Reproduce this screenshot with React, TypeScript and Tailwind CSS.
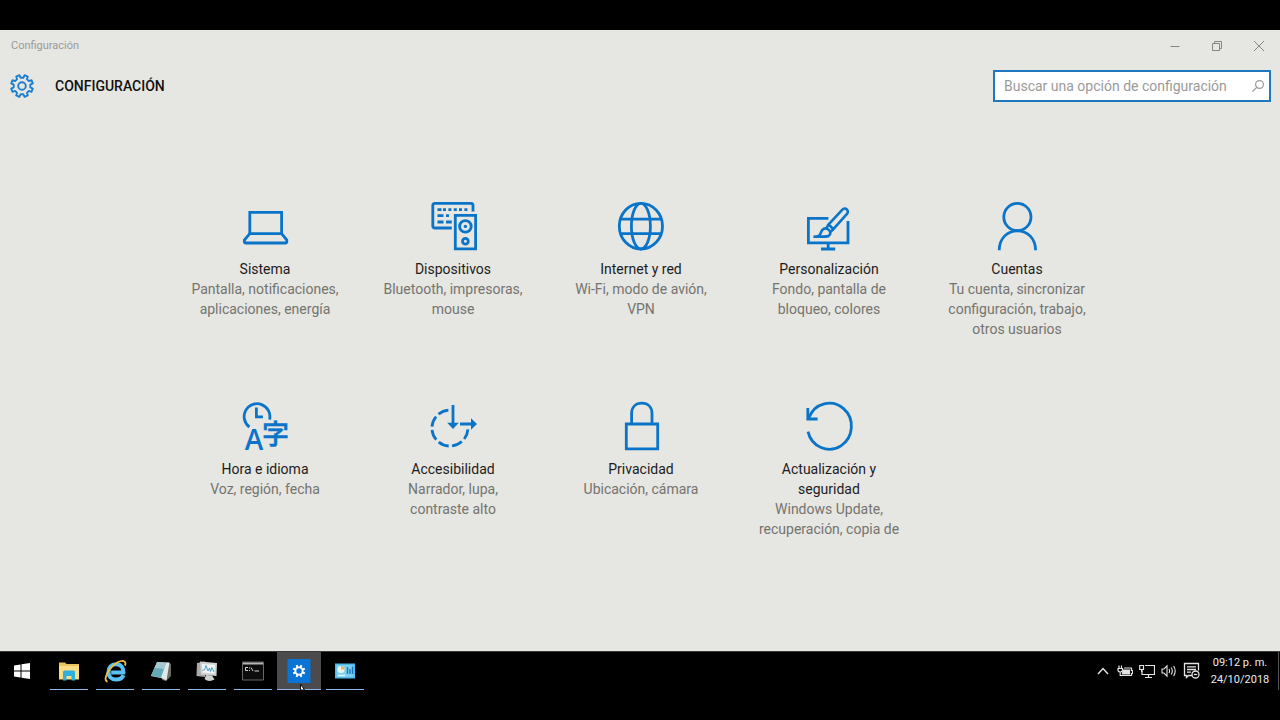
import React from 'react';

// Outline of a cog: `teeth` trapezoid teeth between radius r and R, centred on c
const gearPath = (c: number, r: number, R: number, teeth: number): string => {
  const step = (Math.PI * 2) / teeth;
  const points: string[] = [];
  for (let i = 0; i < teeth; i++) {
    const mid = step * (i + 0.5);
    [
      [-0.3, r],
      [-0.2, R],
      [0.2, R],
      [0.3, r],
    ].forEach(([offset, radius]) => {
      const a = mid + offset * step;
      points.push(`${(c + radius * Math.sin(a)).toFixed(2)} ${(c - radius * Math.cos(a)).toFixed(2)}`);
    });
  }
  return `M${points.join('L')}Z`;
};

const TileIcon: React.FC<{ children: React.ReactNode }> = ({ children }) => (
  <svg
    viewBox="0 0 48 48"
    className="h-12 w-12 shrink-0 overflow-visible text-[#0a74c8]"
    fill="none"
    stroke="currentColor"
    strokeWidth="2.8"
    aria-hidden="true"
  >
    {children}
  </svg>
);

const LaptopIcon = () => (
  <TileIcon>
    <path d="M8.8 10.4H40.6V31.6H8.8Z" />
    <path d="M8.8 31.6L3.4 38V39.4Q3.4 41 5 41H44.2Q45.8 41 45.8 39.4V38L40.6 31.6" />
  </TileIcon>
);

const DevicesIcon = () => (
  <TileIcon>
    <path d="M22.8 26H5.8Q3.8 26 3.8 24V3.4Q3.8 1.4 5.8 1.4H42Q44 1.4 44 3.4V9.6" />
    <path d="M8.5 7.7H12.5M14 7.7H17M19.4 7.7H22.4M24.8 7.7H27.8M30 7.7H33M35.4 7.7H38.4M8.5 13.7H14.5M17 13.7H20M8.5 20H14.5M17 20H22.8" />
    <path d="M26.3 13.4H46.6V46.8H26.3Z" />
    <circle cx="36.4" cy="24.4" r="5.8" />
    <circle cx="36.4" cy="24.4" r="1.7" fill="currentColor" stroke="none" />
    <circle cx="36.4" cy="39.3" r="2.9" />
  </TileIcon>
);

const GlobeIcon = () => (
  <TileIcon>
    <ellipse cx="23.9" cy="24.2" rx="21.6" ry="22.8" />
    <ellipse cx="23.9" cy="24.2" rx="9.5" ry="22.8" />
    <path d="M3.4 17.2H44.4M3.4 31.6H44.4" />
  </TileIcon>
);

const BrushIcon = () => (
  <TileIcon>
    <path d="M23.4 16.4H3.4V40.8H43V19" />
    <path d="M23.2 41V47M16 47H30.2" />
    <path d="M37.4 7.6A3 3 0 0 1 42 11.9L28.4 27.2L23.6 22.4Z" strokeWidth="2.6" />
    <path d="M23.6 22.4L21.4 26.2M28.4 27.2L25.2 30" strokeWidth="2.6" />
    <path
      d="M8.4 34.8C13.6 34.8 15 33.6 16 30.4C17 26.6 20.4 25.4 23 27.2C26 29.2 26 32.4 23.6 34C22.2 34.8 20 34.8 8.4 34.8Z"
      strokeWidth="2.6"
    />
  </TileIcon>
);

const PersonIcon = () => (
  <TileIcon>
    <circle cx="24.4" cy="15" r="13.6" />
    <path d="M6.2 48.2C6.400 36.6 14 28.8 24.4 28.8S42.400 36.6 42.600 48.2" />
  </TileIcon>
);

const TimeLanguageIcon = () => (
  <TileIcon>
    <path d="M8.4 25A12.9 12.9 0 1 1 28.6 17.6" />
    <path d="M15.4 5.6V14.8H22" />
    <text x="13" y="48" fontSize="28" fontWeight="600" textAnchor="middle" fill="currentColor" stroke="none" className="font-['Open_Sans',sans-serif]">
      A
    </text>
    <text x="34.4" y="42" fontSize="27" fontWeight="500" textAnchor="middle" fill="currentColor" strokeWidth="0.5" className="font-['Noto_Sans_CJK_JP',sans-serif]">
      字
    </text>
  </TileIcon>
);

const AccessIcon = () => (
  <TileIcon>
    <path d="M19.4 8.1A18 18 0 1 0 38.9 27.4" strokeDasharray="10.8 3.4" />
    <path d="M24 3V22M31 22H43" />
    <path d="M18.2 20.8H29.8L24 27ZM42 16.2L48 22L42 27.8Z" fill="currentColor" stroke="none" />
  </TileIcon>
);

const LockIcon = () => (
  <TileIcon>
    <path d="M9.3 22H40.7V46.8H9.3Z" />
    <path d="M14.6 22V11.6C14.6 5 18.8 1.2 24.8 1.2S35 5 35 11.6V22" />
  </TileIcon>
);

const RestoreIcon = () => (
  <TileIcon>
    <path d="M3 29.6A22 23 0 1 0 4 15.6L3.2 17" />
    <path d="M2.8 6V17H12.6" />
  </TileIcon>
);

interface Category {
  title: string;
  description: string;
  icon: React.FC;
}

const categories: Category[] = [
  { title: 'Sistema', description: 'Pantalla, notificaciones,\naplicaciones, energía', icon: LaptopIcon },
  { title: 'Dispositivos', description: 'Bluetooth, impresoras,\nmouse', icon: DevicesIcon },
  { title: 'Internet y red', description: 'Wi-Fi, modo de avión,\nVPN', icon: GlobeIcon },
  { title: 'Personalización', description: 'Fondo, pantalla de\nbloqueo, colores', icon: BrushIcon },
  { title: 'Cuentas', description: 'Tu cuenta, sincronizar\nconfiguración, trabajo,\notros usuarios', icon: PersonIcon },
  { title: 'Hora e idioma', description: 'Voz, región, fecha', icon: TimeLanguageIcon },
  { title: 'Accesibilidad', description: 'Narrador, lupa,\ncontraste alto', icon: AccessIcon },
  { title: 'Privacidad', description: 'Ubicación, cámara', icon: LockIcon },
  { title: 'Actualización y\nseguridad', description: 'Windows Update,\nrecuperación, copia de', icon: RestoreIcon },
];

const CategoryTile: React.FC<{ category: Category }> = ({ category }) => {
  const Icon = category.icon;
  return (
    <button type="button" className="flex min-h-[160px] flex-col items-center text-center text-sm leading-5 whitespace-pre-line">
      <Icon />
      <span className="mt-[9px] text-[#1c1c1c]">{category.title}</span>
      <span className="text-[#74746f]">{category.description}</span>
    </button>
  );
};

const WindowControls: React.FC = () => (
  <div className="flex text-[#858583]">
    <button type="button" aria-label="Minimizar" className="flex h-8 w-[42px] items-center justify-center">
      <svg viewBox="0 0 12 12" className="h-3 w-3" fill="none" stroke="currentColor">
        <path d="M1.5 6.5H10.5" />
      </svg>
    </button>
    <button type="button" aria-label="Restaurar" className="flex h-8 w-[42px] items-center justify-center">
      <svg viewBox="0 0 12 12" className="h-3 w-3" fill="none" stroke="currentColor">
        <path d="M1.5 3.5H8.5V10.5H1.5ZM3.5 3.5V1.5H10.5V8.5H8.5" />
      </svg>
    </button>
    <button type="button" aria-label="Cerrar" className="flex h-8 w-[42px] items-center justify-center">
      <svg viewBox="0 0 12 12" className="h-3 w-3" fill="none" stroke="currentColor">
        <path d="M1 1L11 11M11 1L1 11" />
      </svg>
    </button>
  </div>
);

const FolderIcon = () => (
  <svg viewBox="0 0 24 24" className="h-6 w-6">
    <path d="M2 3.5H8L9.5 5H22V20H2Z" fill="#e9c35c" />
    <path d="M2 7H22V20.5H2Z" fill="#f8dc86" />
    <path d="M6 13Q6 11.5 7.5 11.5H16.5Q18 11.5 18 13V21.5H14.5V17H9.5V21.5H6Z" fill="#2fb0dc" />
  </svg>
);

const ExplorerIcon = () => (
  <svg viewBox="0 0 24 24" className="h-6 w-6" fill="none">
    <path d="M20.5 16.2C19.2 19.4 16.4 20.5 13 20.5C8 20.5 5.5 17.4 5.5 13C5.5 8.2 8.4 5.2 13 5.2C18 5.2 20.6 8.600 20.4 13.400H8.2" stroke="#5cc0f2" strokeWidth="4" />
    <path d="M4.5 22.5C1.5 22 2 16.5 6.5 10.5C11.5 4 18.5 0.5 21.5 2.5C22.7 3.4 22.6 5 21.900 6.600" stroke="#eec141" strokeWidth="1.8" />
  </svg>
);

const NotepadIcon = () => (
  <svg viewBox="0 0 24 24" className="h-6 w-6">
    <path d="M19.5 3.5L22 5V17L17 22L13 21Z" fill="#6c6f60" />
    <path d="M8 3L20.5 3.5L17.5 21.5L12 19L2 17Z" fill="#dfe9ea" />
    <path d="M8 3.5L17 4L12 19L2 16.5Z" fill="#65a9b8" />
    <path d="M8 3.5L17 4L15 10L5.5 9Z" fill="#a4c8cf" />
  </svg>
);

const MonitorIcon = () => (
  <svg viewBox="0 0 24 24" className="h-6 w-6">
    <path d="M2 4L10 2.5V18L1.5 17Z" fill="#a9aba9" />
    <path d="M5 2.5L22 4L21.5 17L6 15.5Z" fill="#cfd2d1" />
    <path d="M7 5L20 5.8L19.6 14.5L7.6 13.5Z" fill="#f0f6f8" />
    <path d="M7.5 11.5L9.5 11L11 6.5L13 12L14.5 9L15.5 12.5L17 8.5L19 13" fill="none" stroke="#4d9ecb" />
    <path d="M11 16L17 16.5L19.5 20.5Q14 23.500 9.5 20Z" fill="#cfd1cd" />
  </svg>
);

const ConsoleIcon = () => (
  <svg viewBox="0 0 24 24" className="h-6 w-6">
    <path d="M1.5 3H22.5V21H1.5Z" fill="#0c0c0c" stroke="#666" />
    <path d="M2 3.5H22V5.5H2Z" fill="#b7b7b7" />
    <path d="M7 8.5H4.5V11.5H7M8.5 8.5V9.5M8.5 11V12M10 8.5L12 12M13.5 12H18" fill="none" stroke="#d6d6d6" />
  </svg>
);

const SettingsIcon = () => (
  <svg viewBox="0 0 24 24" className="h-6 w-6">
    <path d="M0.5 0H23.5V24H0.5Z" fill="#0a74d6" />
    <path d={gearPath(12, 4.6, 6.4, 8)} fill="#fff" />
    <circle cx="12" cy="12" r="2.7" fill="#0a74d6" />
  </svg>
);

const ControlPanelIcon = () => (
  <svg viewBox="0 0 24 24" className="h-6 w-6">
    <path d="M2 4.5H22V19.5H2Z" fill="#4db9ea" />
    <path d="M3.5 6H20.5V18H3.5Z" fill="#79d0f4" />
    <circle cx="8" cy="10.5" r="3.6" fill="#e8f3f2" />
    <path d="M8 10.5V6.9A3.6 3.6 0 0 1 11.6 10.5Z" fill="#e9b54b" />
    <path d="M5 16.5H12" stroke="#e4f6ff" strokeWidth="1.5" />
    <path d="M14.5 8V15M17 10V15M19.5 7.5V15" stroke="#1c77b8" strokeWidth="1.4" />
  </svg>
);

const taskbarApps = [
  { name: 'Explorador de archivos', icon: FolderIcon, active: false },
  { name: 'Internet Explorer', icon: ExplorerIcon, active: false },
  { name: 'Bloc de notas', icon: NotepadIcon, active: false },
  { name: 'Monitor', icon: MonitorIcon, active: false },
  { name: 'Símbolo del sistema', icon: ConsoleIcon, active: false },
  { name: 'Configuración', icon: SettingsIcon, active: true },
  { name: 'Panel de control', icon: ControlPanelIcon, active: false },
];

const TrayIcons: React.FC = () => (
  <div className="flex items-center gap-1.5 text-[#e4e4e4]">
    <svg viewBox="0 0 16 16" className="h-4 w-4" fill="none" stroke="currentColor" strokeWidth="1.4">
      <path d="M3 11L8 5.5L13 11" />
    </svg>
    <svg viewBox="0 0 16 16" className="h-4 w-4" fill="none" stroke="currentColor" strokeWidth="1.2">
      <path d="M2 2.5V5M4.5 2.5V5M1 5.5H5.5V7.5Q5 9 3.2 9Q1.400 9 1 7.5ZM3.2 9V12.5H14.5V10.5H15.5V7.5H14.5V5H7" />
      <path d="M6 7H12.5V11H5.5Z" fill="currentColor" />
    </svg>
    <svg viewBox="0 0 16 16" className="h-4 w-4" fill="none" stroke="currentColor" strokeWidth="1.2">
      <path d="M6 2.5H15.5V11.5H3V7M9.5 11.5V14M6 14.5H13" />
      <path d="M0.7 2.5H4.5V6.5H0.7ZM2.6 6.5V9" />
    </svg>
    <svg viewBox="0 0 16 16" className="h-4 w-4" fill="none" stroke="currentColor" strokeWidth="1.1">
      <path d="M1 6H3L6 2.8V13.2L3 10H1Z" />
      <path d="M8 6Q9.2 8 8 10M10.2 4.5Q12.4 8 10.2 11.5M12.6 3Q15.8 8 12.6 13" />
    </svg>
    <svg viewBox="0 0 18 18" className="h-[18px] w-[18px]" fill="none" stroke="currentColor" strokeWidth="1.3">
      <path d="M9 13.5H5.5L3.5 15.5V13.5H1.5V1.5H15.5V8.5M4 4.8H13M4 7.5H13M4 10.2H8" />
      <circle cx="12.5" cy="12.5" r="3.5" />
      <path d="M10.8 12.5H14.2" />
    </svg>
  </div>
);

const Taskbar: React.FC = () => (
  <footer className="flex h-[39px] items-stretch border-t border-[#3a3a3a] bg-black">
    <button type="button" aria-label="Inicio" className="flex w-[46px] items-center justify-center pr-0.5">
      <svg viewBox="0 0 16 16" className="h-4 w-4" fill="#fff">
        <path d="M0 2.4L6.5 1.5V7.5H0ZM7.5 1.3L16 0V7.5H7.5ZM0 8.5H6.5V14.5L0 13.6ZM7.5 8.5H16V16L7.5 14.7Z" />
      </svg>
    </button>
    <nav className="flex">
      {taskbarApps.map(({ name, icon: Icon, active }) => (
        <button
          key={name}
          type="button"
          aria-label={name}
          className={`relative flex w-[46px] flex-col ${active ? 'px-px' : 'px-1'}`}
        >
          <span className={`flex w-full flex-1 items-center justify-center border-b border-[#8db8ea] ${active ? 'bg-[#4b4b4d]' : ''}`}>
            <Icon />
          </span>
          {active && (
            <svg viewBox="0 0 8 6" className="absolute bottom-0 left-[23px] h-1.5 w-2" aria-hidden="true">
              <path d="M1.5 0V6H5.5Z" fill="#fff" stroke="#111" />
            </svg>
          )}
        </button>
      ))}
    </nav>
    <div className="ml-auto flex items-center">
      <TrayIcons />
      <div className="ml-[9px] w-[60px] text-center text-[11px] leading-[17px] whitespace-nowrap text-[#ececec]">
        <p>09:12 p. m.</p>
        <p>24/10/2018</p>
      </div>
      <button type="button" aria-label="Mostrar escritorio" className="ml-2 h-full w-0.5 border-l border-[#555]" />
    </div>
  </footer>
);

const App: React.FC = () => {
  return (
    <div className="flex min-h-screen flex-col bg-black py-[30px] font-['Roboto','Open_Sans',sans-serif]">
      <main className="flex-1 bg-[#e6e6e2]">
        <div className="flex h-8 items-center justify-between pl-[11px]">
          <span className="text-[11px] text-[#9b9b98]">Configuración</span>
          <WindowControls />
        </div>

        <header className="flex items-center justify-between pt-2 pr-[9px] pl-[9px]">
          <div className="flex items-center gap-5">
            <svg viewBox="0 0 26 26" className="h-[26px] w-[26px]" fill="none" stroke="#1b7fd0" strokeWidth="1.9" strokeLinejoin="round">
              <path d={gearPath(13, 8.4, 11.1, 8)} />
              <circle cx="13" cy="13" r="3.8" />
            </svg>
            <h1 className="text-sm font-medium text-[#111]">CONFIGURACIÓN</h1>
          </div>
          <label className="flex h-8 w-[278px] items-center border-2 border-[#1f78bf] bg-white pr-1 pl-[9px]">
            <input
              type="text"
              aria-label="Buscar una opción de configuración"
              placeholder="Buscar una opción de configuración"
              className="min-w-0 flex-1 text-sm text-[#333] placeholder-[#9a9a9a] outline-none"
            />
            <svg viewBox="0 0 14 14" className="h-3.5 w-3.5" fill="none" stroke="#9a9a9a" strokeWidth="1.2">
              <circle cx="8.5" cy="5.5" r="3.9" />
              <path d="M5.7 8.3L1.5 12.5" />
            </svg>
          </label>
        </header>

        <section className="mx-auto grid w-full max-w-[942px] grid-cols-5 gap-y-10 pt-[100px] pl-0.5">
          {categories.map((category) => (
            <CategoryTile key={category.title} category={category} />
          ))}
        </section>
      </main>
      <Taskbar />
    </div>
  );
};

export default App;
